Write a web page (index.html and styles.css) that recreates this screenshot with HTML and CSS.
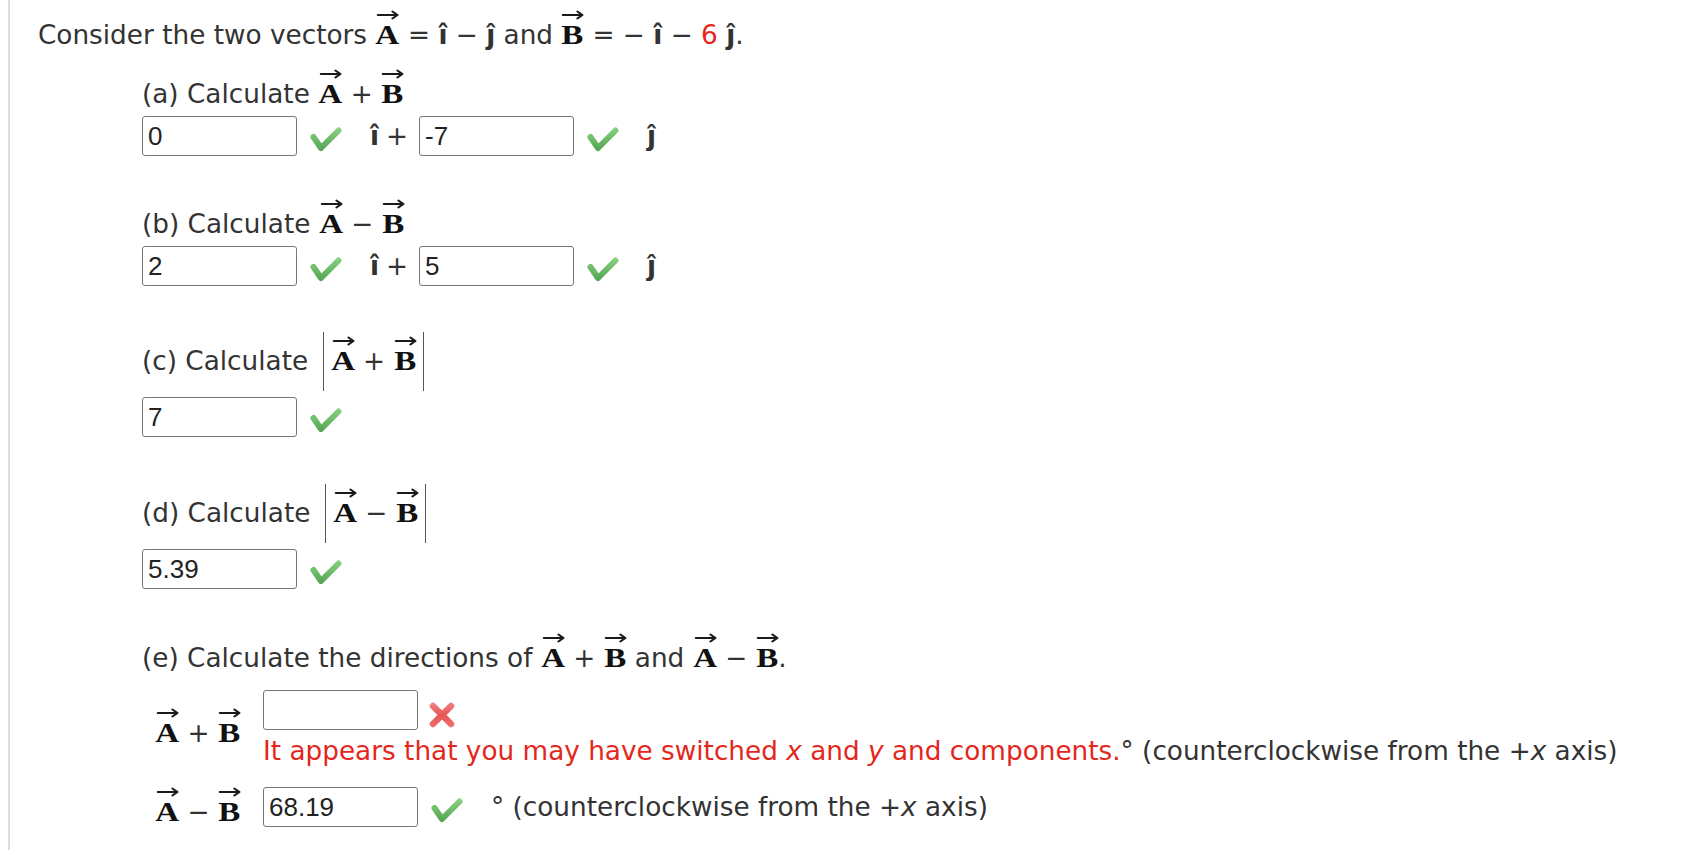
FILE: index.html
```html
<!DOCTYPE html>
<html lang="en">
<head>
<meta charset="utf-8">
<title>Vectors</title>
<link rel="stylesheet" href="styles.css">
</head>
<body>
<svg class="defs" width="0" height="0" aria-hidden="true">
  <defs>
    <linearGradient id="gok" x1="0" y1="0" x2="0" y2="28" gradientUnits="userSpaceOnUse">
      <stop offset="0" stop-color="#93d88c"/>
      <stop offset="1" stop-color="#4ea24c"/>
    </linearGradient>
    <linearGradient id="gx" x1="0" y1="0" x2="0" y2="28" gradientUnits="userSpaceOnUse">
      <stop offset="0" stop-color="#f48a8a"/>
      <stop offset="0.5" stop-color="#e65656"/>
      <stop offset="1" stop-color="#f07474"/>
    </linearGradient>
  </defs>
</svg>
<div class="page">
  <p class="intro">Consider the two vectors <span class="vec">A<svg class="arr" viewBox="0 0 20 10" width="20" height="10"><path d="M1 5H18.5M14 1.5L18.5 5L14 8.5"/></svg></span> = <span class="u">î</span> − <span class="u">ĵ</span> and <span class="vec">B<svg class="arr" viewBox="0 0 20 10" width="20" height="10"><path d="M1 5H18.5M14 1.5L18.5 5L14 8.5"/></svg></span> = − <span class="u">î</span> − <span class="red">6</span> <span class="u">ĵ</span>.</p>

  <div class="part pa">
    <p class="label">(a) Calculate <span class="vec">A<svg class="arr" viewBox="0 0 20 10" width="20" height="10"><path d="M1 5H18.5M14 1.5L18.5 5L14 8.5"/></svg></span> + <span class="vec">B<svg class="arr" viewBox="0 0 20 10" width="20" height="10"><path d="M1 5H18.5M14 1.5L18.5 5L14 8.5"/></svg></span></p>
    <div class="row">
      <input class="field" type="text" value="0">
      <svg class="ic ok" viewBox="0 0 35 28" width="35" height="28"><path d="M5.5 13L13 24L30.5 6.5"/></svg>
      <span class="u hat">î</span><span class="plus">+</span>
      <input class="field" type="text" value="-7">
      <svg class="ic ok" viewBox="0 0 35 28" width="35" height="28"><path d="M5.5 13L13 24L30.5 6.5"/></svg>
      <span class="u hat">ĵ</span>
    </div>
  </div>

  <div class="part pb">
    <p class="label">(b) Calculate <span class="vec">A<svg class="arr" viewBox="0 0 20 10" width="20" height="10"><path d="M1 5H18.5M14 1.5L18.5 5L14 8.5"/></svg></span> − <span class="vec">B<svg class="arr" viewBox="0 0 20 10" width="20" height="10"><path d="M1 5H18.5M14 1.5L18.5 5L14 8.5"/></svg></span></p>
    <div class="row">
      <input class="field" type="text" value="2">
      <svg class="ic ok" viewBox="0 0 35 28" width="35" height="28"><path d="M5.5 13L13 24L30.5 6.5"/></svg>
      <span class="u hat">î</span><span class="plus">+</span>
      <input class="field" type="text" value="5">
      <svg class="ic ok" viewBox="0 0 35 28" width="35" height="28"><path d="M5.5 13L13 24L30.5 6.5"/></svg>
      <span class="u hat">ĵ</span>
    </div>
  </div>

  <div class="part pc">
    <p class="label">(c) Calculate <span class="abs"><span class="vec">A<svg class="arr" viewBox="0 0 20 10" width="20" height="10"><path d="M1 5H18.5M14 1.5L18.5 5L14 8.5"/></svg></span> + <span class="vec">B<svg class="arr" viewBox="0 0 20 10" width="20" height="10"><path d="M1 5H18.5M14 1.5L18.5 5L14 8.5"/></svg></span></span></p>
    <div class="row r6">
      <input class="field" type="text" value="7">
      <svg class="ic ok" viewBox="0 0 35 28" width="35" height="28"><path d="M5.5 13L13 24L30.5 6.5"/></svg>
    </div>
  </div>

  <div class="part pd">
    <p class="label">(d) Calculate <span class="abs"><span class="vec">A<svg class="arr" viewBox="0 0 20 10" width="20" height="10"><path d="M1 5H18.5M14 1.5L18.5 5L14 8.5"/></svg></span> − <span class="vec">B<svg class="arr" viewBox="0 0 20 10" width="20" height="10"><path d="M1 5H18.5M14 1.5L18.5 5L14 8.5"/></svg></span></span></p>
    <div class="row r6">
      <input class="field" type="text" value="5.39">
      <svg class="ic ok" viewBox="0 0 35 28" width="35" height="28"><path d="M5.5 13L13 24L30.5 6.5"/></svg>
    </div>
  </div>

  <div class="part pe">
    <p class="label">(e) Calculate the directions of <span class="vec">A<svg class="arr" viewBox="0 0 20 10" width="20" height="10"><path d="M1 5H18.5M14 1.5L18.5 5L14 8.5"/></svg></span> + <span class="vec">B<svg class="arr" viewBox="0 0 20 10" width="20" height="10"><path d="M1 5H18.5M14 1.5L18.5 5L14 8.5"/></svg></span> and <span class="vec">A<svg class="arr" viewBox="0 0 20 10" width="20" height="10"><path d="M1 5H18.5M14 1.5L18.5 5L14 8.5"/></svg></span> − <span class="vec">B<svg class="arr" viewBox="0 0 20 10" width="20" height="10"><path d="M1 5H18.5M14 1.5L18.5 5L14 8.5"/></svg></span>.</p>
    <div class="dir">
      <p class="dlabel"><span class="vec">A<svg class="arr" viewBox="0 0 20 10" width="20" height="10"><path d="M1 5H18.5M14 1.5L18.5 5L14 8.5"/></svg></span> + <span class="vec">B<svg class="arr" viewBox="0 0 20 10" width="20" height="10"><path d="M1 5H18.5M14 1.5L18.5 5L14 8.5"/></svg></span></p>
      <div class="ans">
        <div class="row">
          <input class="field" type="text" value="">
          <svg class="ic bad" viewBox="0 0 28 28" width="28" height="28"><path d="M5 5L23 23M23 5L5 23"/></svg>
        </div>
        <p class="fb"><span class="red">It appears that you may have switched <i>x</i> and <i>y</i> and components.</span>° (counterclockwise from the +<i>x</i> axis)</p>
      </div>
      <p class="dlabel"><span class="vec">A<svg class="arr" viewBox="0 0 20 10" width="20" height="10"><path d="M1 5H18.5M14 1.5L18.5 5L14 8.5"/></svg></span> − <span class="vec">B<svg class="arr" viewBox="0 0 20 10" width="20" height="10"><path d="M1 5H18.5M14 1.5L18.5 5L14 8.5"/></svg></span></p>
      <div class="ans">
        <div class="row">
          <input class="field" type="text" value="68.19">
          <svg class="ic ok" viewBox="0 0 35 28" width="35" height="28"><path d="M5.5 13L13 24L30.5 6.5"/></svg>
          <span class="unit">° (counterclockwise from the +<i>x</i> axis)</span>
        </div>
      </div>
    </div>
  </div>
</div>
</body>
</html>
```

FILE: styles.css
```css
html, body {
  margin: 0;
  padding: 0;
  background: #ffffff;
}

body {
  font-family: "DejaVu Sans", Verdana, sans-serif;
  font-size: 26.3px;
  line-height: 30px;
  color: #333333;
}

.defs {
  position: absolute;
  width: 0;
  height: 0;
  overflow: hidden;
}

.page {
  box-sizing: border-box;
  min-height: 850px;
  margin-left: 8px;
  border-left: 2px solid #dddddd;
  padding: 20px 0 0 28px;
}

p {
  margin: 0;
  white-space: nowrap;
}

.part {
  margin-left: 104px;
}

.pa { margin-top: 29px; }
.pb { margin-top: 53px; }
.pc { margin-top: 46px; }
.pd { margin-top: 47px; }
.pe { margin-top: 54px; }

.label {
  line-height: 30px;
}

.row {
  display: flex;
  align-items: center;
  height: 40px;
  margin-top: 7px;
}

.row.r6 {
  margin-top: 6px;
}

.field {
  box-sizing: border-box;
  width: 155px;
  height: 40px;
  margin: 0;
  padding: 0 0 0 5px;
  border: 1px solid #777777;
  border-radius: 3px;
  background: #ffffff;
  font-family: "Liberation Sans", Arial, sans-serif;
  font-size: 26px;
  color: #222222;
  outline: none;
}

.ic {
  display: block;
  flex: none;
}

.ic.ok {
  margin: 3px 27px 0 11px;
}

.ic.ok path {
  fill: none;
  stroke: url(#gok);
  stroke-width: 6;
  stroke-linecap: round;
  stroke-linejoin: round;
}

.ic.bad {
  margin: 10px 0 0 10px;
}

.ic.bad path {
  fill: none;
  stroke: url(#gx);
  stroke-width: 6.5;
  stroke-linecap: round;
}

.u {
  font-family: "DejaVu Sans", Verdana, sans-serif;
  font-weight: bold;
  color: #333333;
}

.hat {
  line-height: 30px;
}

.plus {
  margin: 0 11px 0 7px;
}

.red {
  color: #e5261c;
}

.vec {
  position: relative;
  display: inline-block;
  margin: 0 2px;
  font-family: "Liberation Serif", "Times New Roman", serif;
  font-weight: bold;
  font-size: 28px;
  line-height: 26px;
  color: #111111;
  transform: scaleX(1.18);
}

.arr {
  position: absolute;
  top: -12.5px;
  left: 50%;
  transform: translateX(-46%) scaleX(0.95);
  overflow: visible;
}

.arr path {
  fill: none;
  stroke: #1a1a1a;
  stroke-width: 1.9;
  stroke-linecap: round;
  stroke-linejoin: round;
}

.abs {
  display: inline-block;
  margin-left: 6px;
  padding: 14px 7px 15px;
  border-left: 1.5px solid #555555;
  border-right: 1.5px solid #555555;
  line-height: 30px;
}

.dir {
  display: grid;
  grid-template-columns: 82px auto;
  column-gap: 26px;
  row-gap: 21px;
  justify-content: start;
  margin: 17px 0 0 13px;
}

.dlabel {
  align-self: center;
  padding-top: 10px;
  line-height: 30px;
}

.ans .row {
  margin-top: 0;
}

.fb {
  margin-top: 6px;
  line-height: 30px;
}

.unit {
  line-height: 30px;
}
```
